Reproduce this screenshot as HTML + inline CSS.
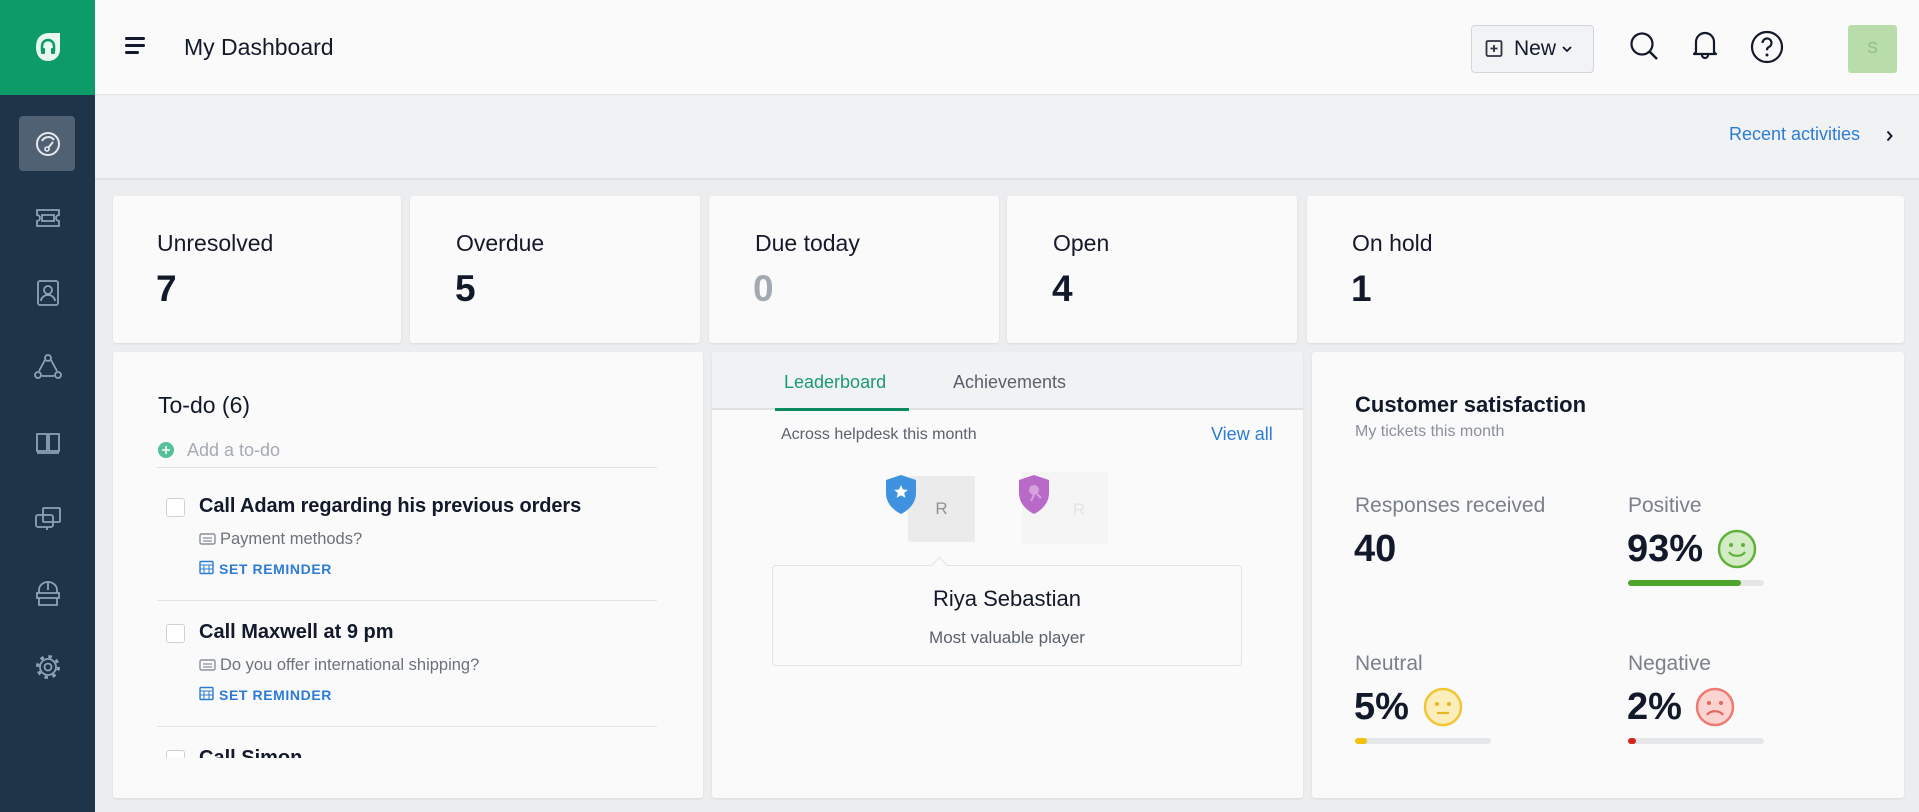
<!DOCTYPE html>
<html><head><meta charset="utf-8"><style>
*{margin:0;padding:0;box-sizing:border-box}
body{width:1919px;height:812px;overflow:hidden;background:#ebedef;font-family:"Liberation Sans",sans-serif;color:#12192b;position:relative}
.a{position:absolute}
.side{left:0;top:0;width:95px;height:812px;background:#1f3448}
.logo{left:0;top:0;width:95px;height:95px;background:#0d9b67}
.hdr{left:95px;top:0;width:1824px;height:95px;background:#fafafa;border-bottom:1px solid #e4e6e8}
.band{left:95px;top:96px;width:1824px;height:84px;background:#f1f2f3;border-bottom:2px solid #dfe1e3}
.card{background:#fafafa;border-radius:3px;box-shadow:0 1px 2px rgba(0,0,0,.08)}
.lbl{font-size:23px;color:#15192a}
.num{font-size:37px;font-weight:bold;color:#12192b}
.ic{stroke:#8ea2b8;fill:none;stroke-width:1.8}
.t{white-space:nowrap}
</style></head><body>
<div class="a side"></div>
<div class="a logo"></div>
<svg class="a" style="left:30px;top:29px" width="36" height="36" viewBox="0 0 36 36"><path d="M6 18 C6 8 12 4 20 4 L30 4 L30 20 C30 28 24 32 18 32 C10 32 6 26 6 18Z" fill="#e9f7f1"/><path d="M12 22 V17 a6 6 0 0 1 12 0 V22" stroke="#0d9b67" stroke-width="2.5" fill="none"/><rect x="11" y="19" width="4" height="6" rx="1" fill="#0d9b67"/><rect x="21" y="19" width="4" height="6" rx="1" fill="#0d9b67"/></svg>
<div class="a" style="left:19px;top:116px;width:56px;height:55px;background:#506174;border-radius:4px"></div>
<svg class="a" style="left:34px;top:130px" width="28" height="28" viewBox="0 0 28 28"><circle cx="14" cy="14" r="11" stroke="#e6eaee" stroke-width="2" fill="none"/><path d="M8 11 a7 7 0 0 1 12 -1 M19 12 L14 18" stroke="#e6eaee" stroke-width="2" fill="none"/><circle cx="13" cy="19" r="2" stroke="#e6eaee" stroke-width="1.6" fill="none"/></svg>
<svg class="a" style="left:34px;top:206px" width="28" height="24"><path class="ic" d="M3 4h22v5a3 3 0 0 0 0 6v5H3v-5a3 3 0 0 0 0-6z M8 9h12v6H8z"/></svg>
<svg class="a" style="left:34px;top:279px" width="28" height="28"><rect class="ic" x="4" y="2" width="20" height="24" rx="2"/><circle class="ic" cx="14" cy="11" r="4"/><path class="ic" d="M7 22a7 6 0 0 1 14 0"/></svg>
<svg class="a" style="left:33px;top:353px" width="30" height="28"><circle class="ic" cx="15" cy="5" r="3"/><circle class="ic" cx="5" cy="22" r="3"/><circle class="ic" cx="25" cy="22" r="3"/><path class="ic" d="M12 7 L6 18 M18 7 L24 18 M9 23 H21"/></svg>
<svg class="a" style="left:34px;top:430px" width="28" height="26"><path class="ic" d="M3 4h10v17H3z M15 4h10v17H15z M3 23h22"/></svg>
<svg class="a" style="left:33px;top:505px" width="30" height="28"><rect class="ic" x="10" y="3" width="17" height="14" rx="1"/><rect class="ic" x="3" y="10" width="17" height="12" rx="2" fill="#1f3448"/><path class="ic" d="M14 22v3"/></svg>
<svg class="a" style="left:33px;top:578px" width="30" height="30"><path class="ic" d="M6 12a9 8 0 0 1 18 0v3H6z M4 15h22v5H4z M6 20v7h18v-7 M15 4v8"/></svg>
<svg class="a" style="left:34px;top:653px" width="28" height="28"><circle cx="14" cy="14" r="10.5" stroke="#8ea2b8" stroke-width="3" fill="none" stroke-dasharray="3.5 4.75"/><circle class="ic" cx="14" cy="14" r="8"/><circle class="ic" cx="14" cy="14" r="3.5"/></svg>

<div class="a hdr"></div>
<div class="a" style="left:125px;top:37px;width:20px;height:3px;background:#12192b;border-radius:2px"></div>
<div class="a" style="left:125px;top:44px;width:20px;height:3px;background:#12192b;border-radius:2px"></div>
<div class="a" style="left:125px;top:51px;width:14px;height:3px;background:#12192b;border-radius:2px"></div>
<div class="a t" style="left:184px;top:34px;font-size:23px;color:#12192b">My Dashboard</div>
<div class="a" style="left:1471px;top:25px;width:123px;height:48px;background:#f1f3f5;border:1px solid #d2d6db;border-radius:4px"></div>
<svg class="a" style="left:1485px;top:39px" width="18" height="20"><rect x="1.5" y="2" width="15" height="15" rx="1.5" stroke="#2b3240" stroke-width="1.8" fill="none"/><path d="M9 6v7M5.5 9.5h7" stroke="#2b3240" stroke-width="1.8"/></svg>
<div class="a t" style="left:1514px;top:37px;font-size:21px;color:#12192b">New</div>
<svg class="a" style="left:1562px;top:45px" width="10" height="8"><path d="M1 2l4 4 4-4" stroke="#12192b" stroke-width="1.8" fill="none"/></svg>
<svg class="a" style="left:1628px;top:30px" width="34" height="34"><circle cx="14" cy="14" r="10.5" stroke="#12192b" stroke-width="2.2" fill="none"/><path d="M21.5 21.5L29 29" stroke="#12192b" stroke-width="2.4"/></svg>
<svg class="a" style="left:1690px;top:28px" width="30" height="34"><path d="M6 24V14a9 9 0 0 1 18 0v10l2 2H4z" stroke="#12192b" stroke-width="2.2" fill="none" stroke-linejoin="round"/><path d="M12 27a3 3 0 0 0 6 0" stroke="#12192b" stroke-width="2.2" fill="none"/></svg>
<svg class="a" style="left:1750px;top:30px" width="34" height="34"><circle cx="17" cy="17" r="15" stroke="#12192b" stroke-width="2.2" fill="none"/><path d="M12.5 13a4.5 4.5 0 1 1 6 4.2c-1.3.6-1.5 1.5-1.5 3" stroke="#12192b" stroke-width="2.2" fill="none"/><circle cx="17" cy="25" r="1.5" fill="#12192b"/></svg>
<div class="a" style="left:1848px;top:25px;width:49px;height:48px;background:#b9dcab;border-radius:3px;color:#8fbf7f;font-size:16px;text-align:center;line-height:48px">S</div>

<div class="a band"></div>
<div class="a t" style="left:1729px;top:124px;font-size:18px;color:#2c7cd6">Recent activities</div>
<svg class="a" style="left:1886px;top:130px" width="8" height="12"><path d="M1.5 1.5l4 4.5-4 4.5" stroke="#12192b" stroke-width="2" fill="none"/></svg>

<div class="a card" style="left:113px;top:196px;width:288px;height:147px"></div>
<div class="a card" style="left:410px;top:196px;width:290px;height:147px"></div>
<div class="a card" style="left:709px;top:196px;width:290px;height:147px"></div>
<div class="a card" style="left:1007px;top:196px;width:290px;height:147px"></div>
<div class="a card" style="left:1307px;top:196px;width:597px;height:147px"></div>
<div class="a t lbl" style="left:157px;top:230px">Unresolved</div><div class="a t num" style="left:156px;top:268px">7</div>
<div class="a t lbl" style="left:456px;top:230px">Overdue</div><div class="a t num" style="left:455px;top:268px">5</div>
<div class="a t lbl" style="left:755px;top:230px">Due today</div><div class="a t num" style="left:753px;top:268px;color:#a3a9b1">0</div>
<div class="a t lbl" style="left:1053px;top:230px">Open</div><div class="a t num" style="left:1052px;top:268px">4</div>
<div class="a t lbl" style="left:1352px;top:230px">On hold</div><div class="a t num" style="left:1351px;top:268px">1</div>

<!-- todo -->
<div class="a card" style="left:113px;top:352px;width:590px;height:446px"></div>
<div class="a t" style="left:158px;top:392px;font-size:23px;color:#12192b">To-do (6)</div>
<svg class="a" style="left:157px;top:441px" width="18" height="18"><circle cx="9" cy="9" r="8" fill="#56c09a"/><path d="M9 5v8M5 9h8" stroke="#e8f7f0" stroke-width="1.8"/></svg>
<div class="a t" style="left:187px;top:440px;font-size:18px;color:#a5abb3">Add a to-do</div>
<div class="a" style="left:157px;top:467px;width:500px;height:1px;background:#dfe2e5"></div>
<div style="position:absolute;left:113px;top:470px;width:590px;height:288px;overflow:hidden">
 <div class="a" style="left:53px;top:28px;width:19px;height:19px;border:1.5px solid #cdd1d6;border-radius:3px;background:#fff"></div>
 <div class="a t" style="left:86px;top:25px;font-size:20px;font-weight:bold;color:#12192b;letter-spacing:-.1px">Call Adam regarding his previous orders</div>
 <svg class="a" style="left:86px;top:63px" width="17" height="12"><rect x="1" y="1" width="15" height="10" rx="1.5" stroke="#8a9099" stroke-width="1.4" fill="none"/><path d="M4 5h9M4 8h9" stroke="#8a9099" stroke-width="1.2"/></svg>
 <div class="a t" style="left:107px;top:60px;font-size:16.5px;color:#6b727c">Payment methods?</div>
 <svg class="a" style="left:86px;top:90px" width="15" height="15"><rect x="1" y="1.5" width="13" height="12" rx="1" stroke="#2c7cd6" stroke-width="1.4" fill="none"/><path d="M1 5h13M5 5v8M10 5v8M1 9h13" stroke="#2c7cd6" stroke-width="1"/></svg>
 <div class="a t" style="left:106px;top:91px;font-size:14px;color:#2c7cd6;font-weight:bold;letter-spacing:.6px">SET REMINDER</div>
 <div class="a" style="left:44px;top:130px;width:500px;height:1px;background:#e2e5e8"></div>
 <div class="a" style="left:53px;top:154px;width:19px;height:19px;border:1.5px solid #cdd1d6;border-radius:3px;background:#fff"></div>
 <div class="a t" style="left:86px;top:151px;font-size:20px;font-weight:bold;color:#12192b">Call Maxwell at 9 pm</div>
 <svg class="a" style="left:86px;top:189px" width="17" height="12"><rect x="1" y="1" width="15" height="10" rx="1.5" stroke="#8a9099" stroke-width="1.4" fill="none"/><path d="M4 5h9M4 8h9" stroke="#8a9099" stroke-width="1.2"/></svg>
 <div class="a t" style="left:107px;top:186px;font-size:16.5px;color:#6b727c">Do you offer international shipping?</div>
 <svg class="a" style="left:86px;top:216px" width="15" height="15"><rect x="1" y="1.5" width="13" height="12" rx="1" stroke="#2c7cd6" stroke-width="1.4" fill="none"/><path d="M1 5h13M5 5v8M10 5v8M1 9h13" stroke="#2c7cd6" stroke-width="1"/></svg>
 <div class="a t" style="left:106px;top:217px;font-size:14px;color:#2c7cd6;font-weight:bold;letter-spacing:.6px">SET REMINDER</div>
 <div class="a" style="left:44px;top:256px;width:500px;height:1px;background:#e2e5e8"></div>
 <div class="a" style="left:53px;top:280px;width:19px;height:19px;border:1.5px solid #cdd1d6;border-radius:3px;background:#fff"></div>
 <div class="a t" style="left:86px;top:277px;font-size:20px;font-weight:bold;color:#12192b">Call Simon</div>
</div>

<!-- leaderboard -->
<div class="a card" style="left:712px;top:352px;width:591px;height:446px"></div>
<div class="a" style="left:712px;top:352px;width:591px;height:58px;background:#f1f2f3;border-bottom:2px solid #dfe1e3;border-radius:3px 3px 0 0"></div>
<div class="a t" style="left:784px;top:372px;font-size:18px;color:#1a9a70">Leaderboard</div>
<div class="a" style="left:775px;top:408px;width:134px;height:3px;background:#0b8a5e"></div>
<div class="a t" style="left:953px;top:372px;font-size:18px;color:#5a616b">Achievements</div>
<div class="a t" style="left:781px;top:426px;font-size:16px;color:#5a616b">Across helpdesk this month</div>
<div class="a t" style="left:1211px;top:424px;font-size:18px;color:#2c7cd6">View all</div>
<div class="a" style="left:908px;top:476px;width:67px;height:66px;background:#ebebeb;border-radius:2px;color:#8e939a;font-size:17px;text-align:center;line-height:66px">R</div>
<div class="a" style="left:1022px;top:472px;width:86px;height:72px;background:#f5f5f5;color:#e4e4e4;font-size:17px;text-align:center;line-height:76px;padding-left:28px">R</div>
<svg class="a" style="left:884px;top:473px" width="34" height="42"><path d="M17 2 L32 7 V20 C32 30 25 37 17 41 C9 37 2 30 2 20 V7Z" fill="#3f92e0"/><path d="M17 12l2 4.5 4.8.4-3.6 3.1 1.1 4.7L17 22.2l-4.3 2.5 1.1-4.7-3.6-3.1 4.8-.4z" fill="#fff"/></svg>
<svg class="a" style="left:1017px;top:473px" width="34" height="42"><path d="M17 2 L32 7 V20 C32 30 25 37 17 41 C9 37 2 30 2 20 V7Z" fill="#b96ac8"/><circle cx="17" cy="17" r="5" fill="#d6a3df"/><path d="M17 22l-3 6M20 21l4 4" stroke="#d6a3df" stroke-width="2"/></svg>
<div class="a" style="left:772px;top:565px;width:470px;height:101px;background:#fafafa;border:1px solid #e1e3e6;border-radius:4px"></div>
<div class="a" style="left:934px;top:559px;width:11px;height:11px;background:#fafafa;border-left:1px solid #e1e3e6;border-top:1px solid #e1e3e6;transform:rotate(45deg)"></div>
<div class="a t" style="left:772px;top:586px;width:470px;text-align:center;font-size:22px;color:#12192b">Riya Sebastian</div>
<div class="a t" style="left:772px;top:628px;width:470px;text-align:center;font-size:17px;color:#5a616b">Most valuable player</div>

<!-- csat -->
<div class="a card" style="left:1312px;top:352px;width:592px;height:446px"></div>
<div class="a t" style="left:1355px;top:392px;font-size:22px;font-weight:bold;color:#12192b">Customer satisfaction</div>
<div class="a t" style="left:1355px;top:423px;font-size:16px;color:#8a9099">My tickets this month</div>
<div class="a t" style="left:1355px;top:494px;font-size:21px;color:#7a8089">Responses received</div>
<div class="a t" style="left:1354px;top:528px;font-size:38px;font-weight:bold;color:#12192b">40</div>
<div class="a t" style="left:1628px;top:494px;font-size:21px;color:#7a8089">Positive</div>
<div class="a t" style="left:1627px;top:528px;font-size:38px;font-weight:bold;color:#12192b">93%</div>
<svg class="a" style="left:1716px;top:528px" width="42" height="42"><circle cx="21" cy="21" r="18" fill="#d4ecc5" stroke="#61b23d" stroke-width="2.5"/><circle cx="15" cy="17" r="2" fill="#61b23d"/><circle cx="27" cy="17" r="2" fill="#61b23d"/><path d="M13 24a9 7 0 0 0 16 0" stroke="#61b23d" stroke-width="2.2" fill="none"/></svg>
<div class="a" style="left:1628px;top:580px;width:136px;height:6px;background:#e4e6e8;border-radius:3px"></div>
<div class="a" style="left:1628px;top:580px;width:113px;height:6px;background:#4ea42d;border-radius:3px"></div>
<div class="a t" style="left:1355px;top:652px;font-size:21px;color:#7a8089">Neutral</div>
<div class="a t" style="left:1354px;top:686px;font-size:38px;font-weight:bold;color:#12192b">5%</div>
<svg class="a" style="left:1422px;top:686px" width="42" height="42"><circle cx="21" cy="21" r="18" fill="#fbeeba" stroke="#f2c535" stroke-width="2.5"/><circle cx="15" cy="18" r="2" fill="#e7b624"/><circle cx="27" cy="18" r="2" fill="#e7b624"/><path d="M15 27h12" stroke="#e7b624" stroke-width="2.2"/></svg>
<div class="a" style="left:1355px;top:738px;width:136px;height:6px;background:#e4e6e8;border-radius:3px"></div>
<div class="a" style="left:1355px;top:738px;width:12px;height:6px;background:#f0c20a;border-radius:3px"></div>
<div class="a t" style="left:1628px;top:652px;font-size:21px;color:#7a8089">Negative</div>
<div class="a t" style="left:1627px;top:686px;font-size:38px;font-weight:bold;color:#12192b">2%</div>
<svg class="a" style="left:1694px;top:686px" width="42" height="42"><circle cx="21" cy="21" r="18" fill="#fbd3d0" stroke="#ee7b72" stroke-width="2.5"/><circle cx="15" cy="17" r="2" fill="#e5665c"/><circle cx="27" cy="17" r="2" fill="#e5665c"/><path d="M13 29a9 7 0 0 1 16 0" stroke="#e5665c" stroke-width="2.2" fill="none"/></svg>
<div class="a" style="left:1628px;top:738px;width:136px;height:6px;background:#e4e6e8;border-radius:3px"></div>
<div class="a" style="left:1628px;top:738px;width:8px;height:6px;background:#d7261b;border-radius:3px"></div>
</body></html>
